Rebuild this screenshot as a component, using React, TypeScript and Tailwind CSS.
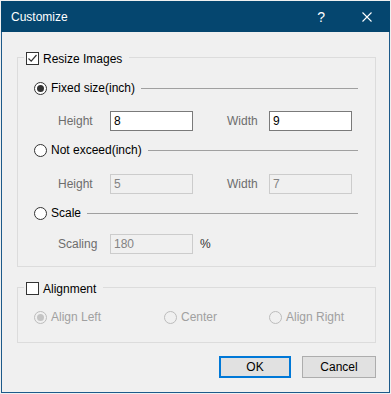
const FONT = { fontFamily: '"Liberation Sans", Arial, sans-serif' };

function Radio({ checked = false, disabled = false }: { checked?: boolean; disabled?: boolean }) {
  return (
    <span
      className={`flex h-[13px] w-[13px] shrink-0 items-center justify-center rounded-full border ${
        disabled ? "border-[#bcbcbc] bg-[#f0f0f0]" : "border-[#333333] bg-white"
      }`}
    >
      {checked && (
        <span className={`h-[7px] w-[7px] rounded-full ${disabled ? "bg-[#c4c4c4]" : "bg-[#333333]"}`} />
      )}
    </span>
  );
}

function Check({ checked = false }: { checked?: boolean }) {
  return (
    <span className="flex h-[13px] w-[13px] shrink-0 items-center justify-center border border-[#333333] bg-white">
      {checked && (
        <svg width="11" height="11" viewBox="0 0 11 11">
          <path d="M1.5 5.5 L4.2 8.2 L9.5 2" fill="none" stroke="#333333" strokeWidth="1.2" />
        </svg>
      )}
    </span>
  );
}

function RadioHeader({ label, checked = false }: { label: string; checked?: boolean }) {
  return (
    <div className="flex h-[14px] items-center pl-[16px] pr-[17px]">
      <Radio checked={checked} />
      <span className="ml-[4px] leading-[14px] text-black">{label}</span>
      <span className="ml-[6px] h-px flex-1 bg-[#a0a0a0]" />
    </div>
  );
}

function Field({ value, disabled = false, className = "" }: { value: string; disabled?: boolean; className?: string }) {
  return (
    <div
      className={`flex h-[20px] w-[83px] items-center border px-[3px] ${
        disabled ? "border-[#cccccc] bg-[#f0f0f0] text-[#838383]" : "border-[#7a7a7a] bg-white text-black"
      } ${className}`}
    >
      {value}
    </div>
  );
}

function SizeRow({ h, w, disabled = false, className = "" }: { h: string; w: string; disabled?: boolean; className?: string }) {
  return (
    <div className={`flex h-[20px] items-center pl-[40px] ${className}`}>
      <span className="w-[52px] text-[#6d6d6d]">Height</span>
      <Field value={h} disabled={disabled} />
      <span className="ml-[34px] w-[42px] text-[#6d6d6d]">Width</span>
      <Field value={w} disabled={disabled} />
    </div>
  );
}

export default function App() {
  return (
    <div className="h-[394px] w-[391px] bg-[#f0f0f0] p-px text-[12px]" style={FONT}>
      <div className="flex h-[392px] w-[389px] flex-col">
        <div className="flex h-[31px] shrink-0 items-center bg-[#05466f] pl-[10px] pr-[18px] text-white">
          <span className="text-[12px]">Customize</span>
          <span className="flex-1" />
          <span className="mr-[37px] text-[14px] leading-none">?</span>
          <svg width="10" height="10" viewBox="0 0 10 10">
            <path d="M0.5 0.5 L9.5 9.5 M9.5 0.5 L0.5 9.5" stroke="white" strokeWidth="1.1" />
          </svg>
        </div>

        <div className="flex flex-1 flex-col border-x border-b border-[#1d5a8a] pl-[15px] pr-[13px]">
          <div className="relative mt-[25px] border border-[#dcdcdc] pb-[12px] pt-[23px]">
            <div className="absolute -top-[6px] left-[6px] flex h-[13px] items-center bg-[#f0f0f0] pl-[2px] pr-[7px]">
              <Check checked />
              <span className="ml-[4px] text-black">Resize Images</span>
            </div>
            <RadioHeader label="Fixed size(inch)" checked />
            <SizeRow h="8" w="9" className="mt-[16px]" />
            <div className="mt-[12px]">
              <RadioHeader label="Not exceed(inch)" />
            </div>
            <SizeRow h="5" w="7" disabled className="mt-[17px]" />
            <div className="mt-[12px]">
              <RadioHeader label="Scale" />
            </div>
            <div className="mt-[14px] flex h-[20px] items-center pl-[40px]">
              <span className="w-[52px] text-[#6d6d6d]">Scaling</span>
              <Field value="180" disabled />
              <span className="ml-[7px] text-[#333333]">%</span>
            </div>
          </div>

          <div className="relative mt-[20px] border border-[#dcdcdc] pb-[18px] pt-[22px]">
            <div className="absolute -top-[6px] left-[6px] flex h-[13px] items-center bg-[#f0f0f0] pl-[2px] pr-[7px]">
              <Check />
              <span className="ml-[4px] text-black">Alignment</span>
            </div>
            <div className="flex h-[14px] items-center pl-[16px] text-[#a0a0a0]">
              <div className="flex w-[130px] items-center">
                <Radio checked disabled />
                <span className="ml-[4px]">Align Left</span>
              </div>
              <div className="flex w-[105px] items-center">
                <Radio disabled />
                <span className="ml-[4px]">Center</span>
              </div>
              <div className="flex items-center">
                <Radio disabled />
                <span className="ml-[4px]">Align Right</span>
              </div>
            </div>
          </div>

          <div className="mt-[13px] flex justify-end gap-[11px]">
            <button type="button" className="h-[22px] w-[72px] border-2 border-[#0078d7] bg-[#e1e1e1] text-black">
              OK
            </button>
            <button type="button" className="h-[22px] w-[74px] border border-[#adadad] bg-[#e1e1e1] text-black">
              Cancel
            </button>
          </div>
        </div>
      </div>
    </div>
  );
}
